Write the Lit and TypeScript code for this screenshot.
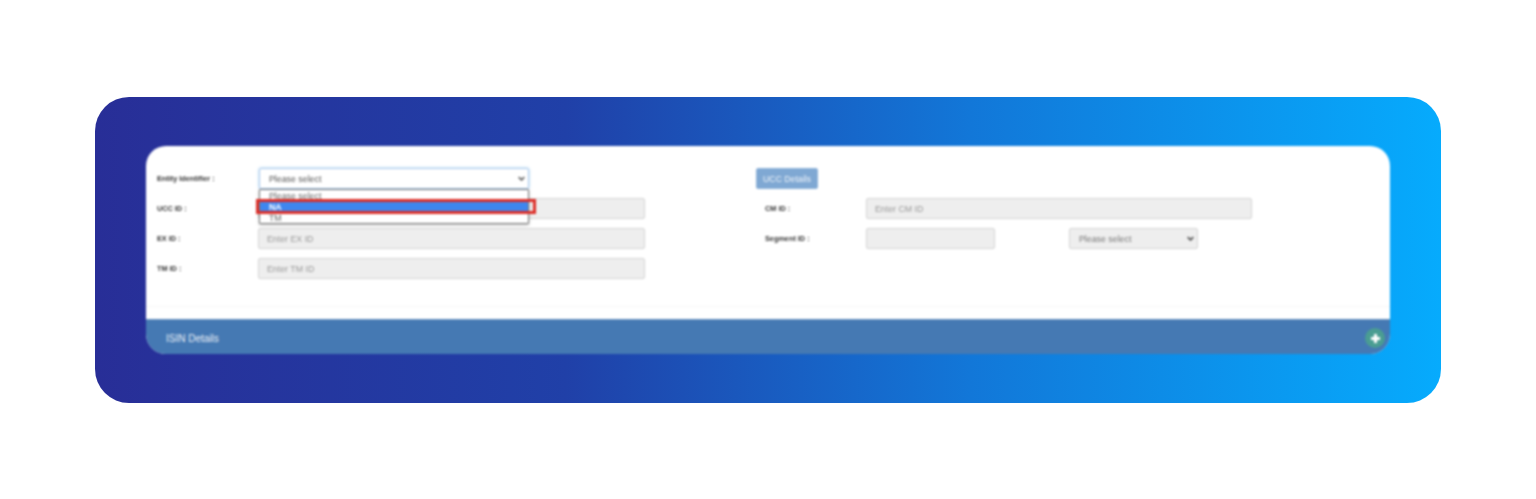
import { LitElement, html, css } from "lit";
import { customElement } from "lit/decorators.js";

@customElement("app-root")
export class AppRoot extends LitElement {
  static styles = css`
    :host { display: block; width: 100%; height: 499px; background: #fff; font-family: "Liberation Sans", Arial, sans-serif; }
    * { box-sizing: border-box; }
    .page { height: 499px; padding: 97px 95px 96px; }
    .outer { height: 306px; border-radius: 34px; padding: 49px 51px; background: linear-gradient(90deg, #282e97 0%, #2040a8 35%, #1277d8 65%, #06abfd 100%); }
    .card { height: 208px; background: #fff; border-radius: 20px; overflow: hidden; display: flex; flex-direction: column; filter: blur(0.8px); }
    .form { height: 173px; flex: none; padding: 22px 0 0 11px; position: relative; }
    .form-inner { display: grid; grid-template-columns: 101px 387px 111px 110px 386px; grid-auto-rows: 21px; row-gap: 9px; align-items: center; }
    .divider { height: 1px; background: #f7f7f7; margin-top: 27px; margin-left: -11px; }
    label { font-size: 7.3px; font-weight: 700; color: #333; padding-bottom: 1px; }
    .rl { grid-column: 4; padding-left: 9px; }
    .field { width: 100%; height: 21px; background: #eeeeee; border: 1px solid #d4d4d4; border-radius: 2px; padding: 0 8px; font: 8.8px "Liberation Sans", Arial, sans-serif; color: #888; display: flex; align-items: center; outline: none; }
    .field::placeholder { color: #999; opacity: 1; }
    .right-field { grid-column: 5; }
    .select-cell { position: relative; grid-column: 2; height: 21px; }
    .open-select { width: 270px; height: 21px; margin: 0 0 0 1px; background: #fff; border: 1px solid #a9c9ec; border-radius: 2px; box-shadow: 0 0 3px rgba(102,175,233,.6); padding: 0 3px 0 9px; font-size: 8.8px; color: #555; display: flex; align-items: center; justify-content: space-between; }
    .open-select svg { width: 7px; height: 5px; }
    .menu { position: absolute; left: 1px; top: 21px; width: 270px; height: 35px; background: #fff; border: 1px solid #777; border-radius: 1px; box-shadow: 0 1px 3px rgba(0,0,0,.3); padding-top: 1px; z-index: 3; font-size: 8.8px; color: #666; }
    .opt { height: 11px; line-height: 10px; padding-left: 9px; }
    .opt.sel { background: #3f86ee; color: #fff; font-weight: 700; }
    .redbox { position: absolute; left: -4px; top: 9px; width: 280px; height: 15px; border: 3px solid #dc2e28; }
    .btn-cell { grid-column: 4 / span 2; }
    .btn { width: 62px; height: 21px; background: #7fa8d3; color: #f2f6fc; font: 8.7px "Liberation Sans", Arial, sans-serif; border: 1px solid #8fb3da; border-radius: 2px; padding: 0; }
    .seg { grid-column: 5; display: flex; justify-content: flex-start; }
    .seg .a { width: 129px; flex: none; }
    .seg .sel-box { width: 129px; flex: none; margin-left: 74px; justify-content: space-between; padding: 0 3px 0 9px; color: #777; }
    .seg svg { width: 7px; height: 5px; }
    .bar { height: 35px; flex: none; background: #4579b3; border-top: 1px solid #6a93c2; display: flex; align-items: center; justify-content: space-between; padding: 2px 5px 0 20px; color: #e8eff7; font-size: 10px; }
    .plus { width: 20px; height: 20px; border-radius: 50%; background: #4a9d92; display: flex; align-items: center; justify-content: center; }
    .plus svg { width: 11px; height: 11px; }
  `;

  private chevron(color: string) {
    return html`<svg viewBox="0 0 10 6"><path d="M1 1l4 4 4-4" fill="none" stroke=${color} stroke-width="2.4"></path></svg>`;
  }

  render() {
    return html`
      <div class="page">
        <div class="outer">
          <div class="card">
            <div class="form">
              <div class="form-inner">
                <label>Entity Identifier :</label>
                <div class="select-cell">
                  <div class="open-select"><span>Please select</span>${this.chevron("#666")}</div>
                  <div class="menu">
                    <div class="opt">Please select</div>
                    <div class="opt sel">NA</div>
                    <div class="opt">TM</div>
                    <div class="redbox"></div>
                  </div>
                </div>
                <div class="btn-cell"><button class="btn">UCC Details</button></div>

                <label>UCC ID :</label>
                <input class="field" readonly placeholder="Enter UCC ID" />
                <label class="rl">CM ID :</label>
                <input class="field right-field" readonly placeholder="Enter CM ID" />

                <label>EX ID :</label>
                <input class="field" readonly placeholder="Enter EX ID" />
                <label class="rl">Segment ID :</label>
                <div class="seg">
                  <div class="field a"></div>
                  <div class="field sel-box"><span>Please select</span>${this.chevron("#555")}</div>
                </div>

                <label>TM ID :</label>
                <input class="field" readonly placeholder="Enter TM ID" />
              </div>
              <div class="divider"></div>
            </div>
            <div class="bar">
              <span>ISIN Details</span>
              <span class="plus"><svg viewBox="0 0 11 11"><path d="M5.5 1v9M1 5.5h9" stroke="#fff" stroke-width="3"></path></svg></span>
            </div>
          </div>
        </div>
      </div>
    `;
  }
}
